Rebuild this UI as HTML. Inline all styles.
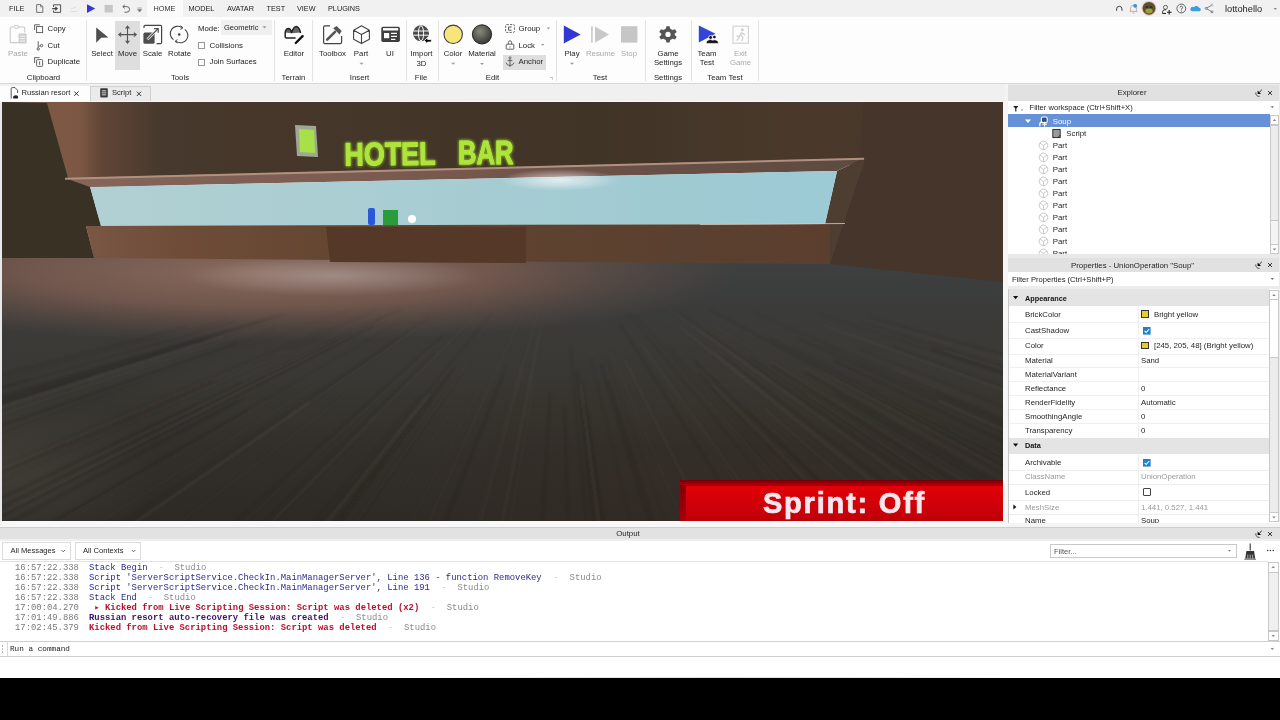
<!DOCTYPE html>
<html><head><meta charset="utf-8"><style>
html,body{margin:0;padding:0}
body{width:1280px;height:720px;overflow:hidden;position:relative;background:#ffffff;font-family:'Liberation Sans', sans-serif}
body div, body svg{position:absolute}

</style></head><body>
<div style="left:0;top:0;width:1280px;height:720px;will-change:transform">
<div style="left:0px;top:0px;width:1280px;height:17px;background:#f1f1f1;"></div><div style="left:147px;top:0px;width:36px;height:17px;background:#fbfbfb;"></div><div style="left:0px;top:17px;width:1280px;height:67px;background:#fdfdfd;"></div><div style="left:0px;top:83px;width:1280px;height:1px;background:#d8d8d8;"></div><div style="left:0px;top:84px;width:1280px;height:441px;background:#f4f4f4;"></div><div style="left:0px;top:84px;width:1005px;height:18px;background:#f0f0f0;"></div><div style="left:0px;top:86px;width:90px;height:16px;background:#fdfdfd;"></div><div style="left:90px;top:86px;width:61px;height:16px;background:#ebebeb;border:1px solid #cfcfcf;border-bottom:none;box-sizing:border-box"></div><div style="left:9px;top:5.36px;font:normal 7.28px/7.28px 'Liberation Sans', sans-serif;color:#1e1e1e;white-space:pre;">FILE</div><div style="left:153.5px;top:5.36px;font:normal 7.28px/7.28px 'Liberation Sans', sans-serif;color:#333;white-space:pre;">HOME</div><div style="left:188.5px;top:5.36px;font:normal 7.28px/7.28px 'Liberation Sans', sans-serif;color:#222;white-space:pre;">MODEL</div><div style="left:227px;top:5.36px;font:normal 7.28px/7.28px 'Liberation Sans', sans-serif;color:#222;white-space:pre;">AVATAR</div><div style="left:266.5px;top:5.36px;font:normal 7.28px/7.28px 'Liberation Sans', sans-serif;color:#222;white-space:pre;">TEST</div><div style="left:297px;top:5.36px;font:normal 7.28px/7.28px 'Liberation Sans', sans-serif;color:#222;white-space:pre;">VIEW</div><div style="left:328px;top:5.36px;font:normal 7.28px/7.28px 'Liberation Sans', sans-serif;color:#222;white-space:pre;">PLUGINS</div><div style="left:1225px;top:5.15px;font:normal 9.3px/9.3px 'Liberation Sans', sans-serif;color:#1e1e1e;white-space:pre;">lottohello</div><div style="left:85.5px;top:20px;width:1px;height:61px;background:#e3e3e3;"></div><div style="left:273.5px;top:20px;width:1px;height:61px;background:#e3e3e3;"></div><div style="left:312px;top:20px;width:1px;height:61px;background:#e3e3e3;"></div><div style="left:405.5px;top:20px;width:1px;height:61px;background:#e3e3e3;"></div><div style="left:437.5px;top:20px;width:1px;height:61px;background:#e3e3e3;"></div><div style="left:555.5px;top:20px;width:1px;height:61px;background:#e3e3e3;"></div><div style="left:644.5px;top:20px;width:1px;height:61px;background:#e3e3e3;"></div><div style="left:690.5px;top:20px;width:1px;height:61px;background:#e3e3e3;"></div><div style="left:758px;top:20px;width:1px;height:61px;background:#e3e3e3;"></div><div style="left:115px;top:21px;width:25px;height:49px;background:#dedede;"></div><div style="left:502.5px;top:54.5px;width:43.5px;height:15.5px;background:#dedede;"></div><div style="left:-256.5px;width:600px;text-align:center;top:74.10px;font:normal 7.8px/7.8px 'Liberation Sans', sans-serif;color:#1e1e1e;white-space:pre;">Clipboard</div><div style="left:-120px;width:600px;text-align:center;top:74.10px;font:normal 7.8px/7.8px 'Liberation Sans', sans-serif;color:#1e1e1e;white-space:pre;">Tools</div><div style="left:-6.5px;width:600px;text-align:center;top:74.10px;font:normal 7.8px/7.8px 'Liberation Sans', sans-serif;color:#1e1e1e;white-space:pre;">Terrain</div><div style="left:59.5px;width:600px;text-align:center;top:74.10px;font:normal 7.8px/7.8px 'Liberation Sans', sans-serif;color:#1e1e1e;white-space:pre;">Insert</div><div style="left:121px;width:600px;text-align:center;top:74.10px;font:normal 7.8px/7.8px 'Liberation Sans', sans-serif;color:#1e1e1e;white-space:pre;">File</div><div style="left:192.5px;width:600px;text-align:center;top:74.10px;font:normal 7.8px/7.8px 'Liberation Sans', sans-serif;color:#1e1e1e;white-space:pre;">Edit</div><div style="left:300px;width:600px;text-align:center;top:74.10px;font:normal 7.8px/7.8px 'Liberation Sans', sans-serif;color:#1e1e1e;white-space:pre;">Test</div><div style="left:368px;width:600px;text-align:center;top:74.10px;font:normal 7.8px/7.8px 'Liberation Sans', sans-serif;color:#1e1e1e;white-space:pre;">Settings</div><div style="left:425px;width:600px;text-align:center;top:74.10px;font:normal 7.8px/7.8px 'Liberation Sans', sans-serif;color:#1e1e1e;white-space:pre;">Team Test</div><div style="left:-282px;width:600px;text-align:center;top:50.10px;font:normal 7.8px/7.8px 'Liberation Sans', sans-serif;color:#a8a8a8;white-space:pre;">Paste</div><div style="left:-198px;width:600px;text-align:center;top:50.10px;font:normal 7.8px/7.8px 'Liberation Sans', sans-serif;color:#1e1e1e;white-space:pre;">Select</div><div style="left:-172.5px;width:600px;text-align:center;top:50.10px;font:normal 7.8px/7.8px 'Liberation Sans', sans-serif;color:#1e1e1e;white-space:pre;">Move</div><div style="left:-147.5px;width:600px;text-align:center;top:50.10px;font:normal 7.8px/7.8px 'Liberation Sans', sans-serif;color:#1e1e1e;white-space:pre;">Scale</div><div style="left:-120.5px;width:600px;text-align:center;top:50.10px;font:normal 7.8px/7.8px 'Liberation Sans', sans-serif;color:#1e1e1e;white-space:pre;">Rotate</div><div style="left:-6px;width:600px;text-align:center;top:50.10px;font:normal 7.8px/7.8px 'Liberation Sans', sans-serif;color:#1e1e1e;white-space:pre;">Editor</div><div style="left:32.5px;width:600px;text-align:center;top:50.10px;font:normal 7.8px/7.8px 'Liberation Sans', sans-serif;color:#1e1e1e;white-space:pre;">Toolbox</div><div style="left:61px;width:600px;text-align:center;top:50.10px;font:normal 7.8px/7.8px 'Liberation Sans', sans-serif;color:#1e1e1e;white-space:pre;">Part</div><div style="left:90px;width:600px;text-align:center;top:50.10px;font:normal 7.8px/7.8px 'Liberation Sans', sans-serif;color:#1e1e1e;white-space:pre;">UI</div><div style="left:121.5px;width:600px;text-align:center;top:50.10px;font:normal 7.8px/7.8px 'Liberation Sans', sans-serif;color:#1e1e1e;white-space:pre;">Import</div><div style="left:121.5px;width:600px;text-align:center;top:59.60px;font:normal 7.8px/7.8px 'Liberation Sans', sans-serif;color:#1e1e1e;white-space:pre;">3D</div><div style="left:153px;width:600px;text-align:center;top:50.10px;font:normal 7.8px/7.8px 'Liberation Sans', sans-serif;color:#1e1e1e;white-space:pre;">Color</div><div style="left:182px;width:600px;text-align:center;top:50.10px;font:normal 7.8px/7.8px 'Liberation Sans', sans-serif;color:#1e1e1e;white-space:pre;">Material</div><div style="left:272px;width:600px;text-align:center;top:50.10px;font:normal 7.8px/7.8px 'Liberation Sans', sans-serif;color:#1e1e1e;white-space:pre;">Play</div><div style="left:300.5px;width:600px;text-align:center;top:50.10px;font:normal 7.8px/7.8px 'Liberation Sans', sans-serif;color:#aaa;white-space:pre;">Resume</div><div style="left:329px;width:600px;text-align:center;top:50.10px;font:normal 7.8px/7.8px 'Liberation Sans', sans-serif;color:#aaa;white-space:pre;">Stop</div><div style="left:368px;width:600px;text-align:center;top:49.60px;font:normal 7.8px/7.8px 'Liberation Sans', sans-serif;color:#1e1e1e;white-space:pre;">Game</div><div style="left:368px;width:600px;text-align:center;top:59.10px;font:normal 7.8px/7.8px 'Liberation Sans', sans-serif;color:#1e1e1e;white-space:pre;">Settings</div><div style="left:407px;width:600px;text-align:center;top:49.60px;font:normal 7.8px/7.8px 'Liberation Sans', sans-serif;color:#1e1e1e;white-space:pre;">Team</div><div style="left:407px;width:600px;text-align:center;top:59.10px;font:normal 7.8px/7.8px 'Liberation Sans', sans-serif;color:#1e1e1e;white-space:pre;">Test</div><div style="left:440.5px;width:600px;text-align:center;top:49.60px;font:normal 7.8px/7.8px 'Liberation Sans', sans-serif;color:#aaa;white-space:pre;">Exit</div><div style="left:440.5px;width:600px;text-align:center;top:59.10px;font:normal 7.8px/7.8px 'Liberation Sans', sans-serif;color:#aaa;white-space:pre;">Game</div><div style="left:47.5px;top:25.10px;font:normal 7.8px/7.8px 'Liberation Sans', sans-serif;color:#1e1e1e;white-space:pre;">Copy</div><div style="left:47.5px;top:41.60px;font:normal 7.8px/7.8px 'Liberation Sans', sans-serif;color:#1e1e1e;white-space:pre;">Cut</div><div style="left:47.5px;top:58.10px;font:normal 7.8px/7.8px 'Liberation Sans', sans-serif;color:#1e1e1e;white-space:pre;">Duplicate</div><div style="left:198px;top:24.60px;font:normal 7.8px/7.8px 'Liberation Sans', sans-serif;color:#1e1e1e;white-space:pre;">Mode:</div><div style="left:221px;top:20px;width:51px;height:14.5px;background:#f0f0f0;"></div><div style="left:224px;top:23.75px;font:normal 7.49px/7.49px 'Liberation Sans', sans-serif;color:#1e1e1e;white-space:pre;">Geometric</div><div style="left:198px;top:41.60px;font:normal 7.8px/7.8px 'Liberation Sans', sans-serif;color:#222;white-space:pre;"></div><div style="left:198px;top:42px;width:7px;height:7px;background:#fff;border:1px solid #999;box-sizing:border-box"></div><div style="left:209.5px;top:41.60px;font:normal 7.8px/7.8px 'Liberation Sans', sans-serif;color:#1e1e1e;white-space:pre;">Collisions</div><div style="left:198px;top:59px;width:7px;height:7px;background:#fff;border:1px solid #999;box-sizing:border-box"></div><div style="left:209.5px;top:58.10px;font:normal 7.8px/7.8px 'Liberation Sans', sans-serif;color:#1e1e1e;white-space:pre;">Join Surfaces</div><div style="left:518.5px;top:25.10px;font:normal 7.8px/7.8px 'Liberation Sans', sans-serif;color:#1e1e1e;white-space:pre;">Group</div><div style="left:518.5px;top:41.60px;font:normal 7.8px/7.8px 'Liberation Sans', sans-serif;color:#1e1e1e;white-space:pre;">Lock</div><div style="left:518.5px;top:58.10px;font:normal 7.8px/7.8px 'Liberation Sans', sans-serif;color:#1e1e1e;white-space:pre;">Anchor</div><div style="left:21.5px;top:89.00px;font:normal 7.59px/7.59px 'Liberation Sans', sans-serif;color:#1e1e1e;white-space:pre;">Russian resort</div><svg style="left:70px;top:88px;overflow:visible" width="12" height="12" viewBox="70 88 12 12"><path d="M74.2,91.4 L78.6,95.8 M78.6,91.4 L74.2,95.8" stroke="#222" stroke-width="0.9"/></svg><div style="left:112px;top:89.41px;font:normal 7.59px/7.59px 'Liberation Sans', sans-serif;color:#1e1e1e;white-space:pre;">Script</div><svg style="left:133px;top:88px;overflow:visible" width="12" height="12" viewBox="133 88 12 12"><path d="M136.8,91.6 L141.2,96 M141.2,91.6 L136.8,96" stroke="#222" stroke-width="0.9"/></svg><svg style="left:30px;top:0px;overflow:visible" width="120" height="17" viewBox="30 0 120 17">
<path d="M36.6,4.6 H40.8 L42.8,6.6 V12.4 H36.6 Z" fill="none" stroke="#666" stroke-width="0.9"/>
<path d="M40.6,4.6 V6.8 H42.8" fill="none" stroke="#666" stroke-width="0.8"/>
<path d="M53.5,7 V4.8 H60.6 V12.4 H53.5 V10.5" fill="none" stroke="#555" stroke-width="1"/>
<path d="M52.2,8.6 H56.8 M55.2,6.8 L57.2,8.6 L55.2,10.4" fill="none" stroke="#444" stroke-width="1.1"/>
<path d="M70.5,11.5 H77 M71,9 L76,7" fill="none" stroke="#ddd" stroke-width="1"/>
<path d="M87,4.2 L95.2,8.6 L87,13 Z" fill="#3538d6"/>
<rect x="104.6" y="4.9" width="8.2" height="7.6" fill="#c6c6c6"/>
<path d="M123.2,6.6 H126.8 A2.8,2.8 0 0 1 126.8,12.2 H124.5 M124.8,4.8 L122.8,6.6 L124.8,8.4" fill="none" stroke="#555" stroke-width="0.9"/>
<path d="M137.4,8 H141.8 M137.6,9.6 L141.6,9.6 L139.6,12 Z" fill="#777" stroke="#777" stroke-width="0.6"/>
</svg><svg style="left:1110px;top:0px;overflow:visible" width="170" height="17" viewBox="1110 0 170 17">
<path d="M1116.6,10.8 V9 A2.7,2.7 0 0 1 1122,9 V10.8" fill="none" stroke="#444" stroke-width="1"/>
<path d="M1129.6,11.4 H1137.4 M1130.6,11.4 V8 A2.9,2.9 0 0 1 1136.4,8 V11.4 M1132.4,12.6 A1.2,1.2 0 0 0 1134.6,12.6" fill="none" stroke="#c0a8a8" stroke-width="0.9"/>
<circle cx="1135.2" cy="5.8" r="1.9" fill="#3a8fc8"/>
<circle cx="1149" cy="8.3" r="7.4" fill="#e8c0c0"/>
<circle cx="1149" cy="8.3" r="6.4" fill="#5a5030"/>
<ellipse cx="1149" cy="11" rx="3.6" ry="2.4" fill="#9aa040"/>
<ellipse cx="1147" cy="7" rx="1.5" ry="1" fill="#3a2a20"/><ellipse cx="1151" cy="7" rx="1.5" ry="1" fill="#3a2a20"/>
<circle cx="1165.5" cy="7.3" r="2" fill="none" stroke="#555" stroke-width="0.9"/>
<path d="M1162.6,13.5 V11.8 A2.2,2.2 0 0 1 1164.8,9.8 H1166" fill="none" stroke="#333" stroke-width="1"/>
<path d="M1162.6,13.5 H1166" stroke="#222" stroke-width="1"/>
<path d="M1169.2,10 V14.4 M1167,12.2 H1171.6" stroke="#222" stroke-width="1.1"/>
<circle cx="1181.3" cy="8.5" r="4.4" fill="none" stroke="#555" stroke-width="0.9"/>
<path d="M1180,7.4 A1.3,1.3 0 1 1 1181.4,8.8 V9.6" fill="none" stroke="#444" stroke-width="0.8"/><circle cx="1181.4" cy="10.9" r="0.5" fill="#444"/>
<path d="M1191.5,11.3 H1199.6 A1.8,1.8 0 0 0 1199,7.8 A2.8,2.8 0 0 0 1194,7.2 A2.1,2.1 0 0 0 1191.5,11.3 Z" fill="#3aa0dc"/>
<circle cx="1206.2" cy="8.4" r="1" fill="none" stroke="#666" stroke-width="0.8"/>
<circle cx="1212" cy="5" r="1" fill="none" stroke="#aaa" stroke-width="0.8"/>
<circle cx="1212" cy="11.9" r="1" fill="none" stroke="#666" stroke-width="0.8"/>
<path d="M1207,7.9 L1211.2,5.5 M1207,8.9 L1211.2,11.4" stroke="#666" stroke-width="0.8"/>
<path d="M1273.5,8 L1277,8 L1275.25,10 Z" fill="#888"/>
</svg><svg style="left:0px;top:17px;overflow:visible" width="90" height="67" viewBox="0 17 90 67">
<path d="M17.8,27 H23.6 A1.2,1.2 0 0 1 24.8,28.2 V32.5 M18.8,42.6 H11.4 A1.2,1.2 0 0 1 10.2,41.4 V28.2 A1.2,1.2 0 0 1 11.4,27 H13.4" fill="none" stroke="#cacaca" stroke-width="1.1"/>
<rect x="14.2" y="25.6" width="4.4" height="2.6" rx="0.8" fill="none" stroke="#cacaca" stroke-width="1"/>
<rect x="18.6" y="33.4" width="8" height="10" rx="0.6" fill="#cdcdcd"/>
<path d="M20.2,36.2 H25 M20.2,38.6 H25 M20.2,41 H25" stroke="#fff" stroke-width="0.8"/>
<path d="M34.6,30 V24.8 H39.8" fill="none" stroke="#555" stroke-width="0.9"/>
<rect x="36.6" y="26.6" width="6" height="6" fill="none" stroke="#555" stroke-width="0.9"/>
<circle cx="38.2" cy="49" r="1.2" fill="none" stroke="#444" stroke-width="0.8"/>
<circle cx="41.6" cy="45.6" r="1.2" fill="none" stroke="#444" stroke-width="0.8"/>
<path d="M38.2,41.2 V47.8 M38.8,46.2 L40.6,45.8" stroke="#444" stroke-width="0.8" fill="none"/>
<path d="M34.6,63 V57.6 H39.6" fill="none" stroke="#555" stroke-width="0.9"/>
<rect x="36.6" y="59.6" width="6" height="6.8" rx="0.8" fill="none" stroke="#555" stroke-width="0.9"/>
<path d="M39.6,61.4 V64.8" stroke="#555" stroke-width="0.9"/>
</svg><svg style="left:90px;top:17px;overflow:visible" width="185" height="67" viewBox="90 17 185 67">
<path d="M96.2,27.4 L108.4,37.4 L101.2,37.8 L96.2,42.8 Z" fill="#4e4e4e"/>
<path d="M127.5,26.6 V42.6 M119.2,34.6 H135.8" stroke="#555" stroke-width="1.1"/>
<path d="M125.6,28.6 L127.5,26.2 L129.4,28.6 M125.6,40.6 L127.5,43 L129.4,40.6 M121.2,32.7 L118.8,34.6 L121.2,36.5 M133.8,32.7 L136.2,34.6 L133.8,36.5" fill="none" stroke="#555" stroke-width="1.1"/>
<path d="M144,28 V26.6 A1.2,1.2 0 0 1 145.2,25.4 H160.4 A1.2,1.2 0 0 1 161.6,26.6 V42.4 A1.2,1.2 0 0 1 160.4,43.6 H156.6" fill="none" stroke="#444" stroke-width="1.2"/>
<rect x="143.4" y="32.6" width="11.2" height="11.2" rx="1.6" fill="#4e4e4e"/>
<path d="M147.4,39.4 L157.8,29" stroke="#fff" stroke-width="2.6"/>
<path d="M147.4,39.4 L157.8,29" stroke="#4e4e4e" stroke-width="1.1"/>
<path d="M154,28.6 H158.2 V32.8" fill="none" stroke="#4e4e4e" stroke-width="1.2"/>
<path d="M173.4,39.6 A7.2,7.2 0 0 1 181.8,27.6" fill="none" stroke="#444" stroke-width="1.1"/>
<path d="M184.8,29.4 A7.2,7.2 0 0 1 176.2,41.4" fill="none" stroke="#444" stroke-width="1.1"/>
<path d="M180.6,25.8 L183,27.8 L180.4,29.4 M177.4,39.6 L175,41.4 L177.6,43" fill="none" stroke="#444" stroke-width="1"/>
<circle cx="179.2" cy="34.5" r="1.3" fill="#444"/>
<path d="M262.5,26.2 L266.5,26.2 L264.5,28.6 Z" fill="#999"/>
</svg><svg style="left:275px;top:17px;overflow:visible" width="165" height="67" viewBox="275 17 165 67">
<path d="M285.2,32.4 Q285.6,28.4 288.8,28.4 Q290.6,28.6 291.6,32 Q293.6,26.2 296.4,26.4 Q299.4,27 300.6,32.6 L291.4,33.2 Z" fill="#666"/>
<path d="M295.6,37.9 H286.6 Q285.2,37.9 285.2,36.4 V32.4 Q285.6,28.4 288.8,28.4 Q290.6,28.6 291.6,32.4 Q293.6,26.2 296.4,26.4 Q299.4,27 300.6,33" fill="none" stroke="#222" stroke-width="1.5" stroke-linejoin="round"/>
<path d="M295.8,43 L300.6,38.2" stroke="#111" stroke-width="2.4" stroke-linecap="round"/>
<path d="M301.6,37.2 L302.6,36.2" stroke="#111" stroke-width="2.4" stroke-linecap="round"/>
<path d="M330,25.8 H325 A1.4,1.4 0 0 0 323.6,27.2 V42.2 A1.4,1.4 0 0 0 325,43.6 H340.2 A1.4,1.4 0 0 0 341.6,42.2 V36" fill="none" stroke="#444" stroke-width="1.2"/>
<path d="M327.2,39.6 L335,31.8" stroke="#555" stroke-width="2.6" stroke-linecap="round"/>
<path d="M333.2,28.2 L336.6,26 L341.6,31 L339.6,34.4 Z" fill="#555"/>
<path d="M361.5,25.8 L369.4,30.2 V39.2 L361.5,43.6 L353.6,39.2 V30.2 Z M353.6,30.2 L361.5,34.6 L369.4,30.2 M361.5,34.6 V43.6" fill="none" stroke="#444" stroke-width="1.1" stroke-linejoin="round"/>
<rect x="381.3" y="26.8" width="18.6" height="15.3" rx="1.8" fill="#3e3e3e"/>
<rect x="383" y="28.1" width="15.2" height="2.4" fill="#fff"/>
<rect x="384" y="33" width="5.2" height="5.2" fill="#fff"/>
<path d="M391,33.4 H397 M391,36.4 H397 M391,39.4 H395.4" stroke="#fff" stroke-width="1.1"/>
<circle cx="421" cy="33.3" r="8" fill="#4a4a4a"/>
<path d="M413.4,31 H428.6 M413.4,35.2 H428.6" stroke="#fff" stroke-width="1"/>
<ellipse cx="421" cy="33.3" rx="2.6" ry="7.6" fill="none" stroke="#fff" stroke-width="1"/>
<path d="M424.4,40.6 L427.6,37.4 L427.6,39.4 H431.4 V42 H427.6 V44 Z" fill="#000" stroke="#fff" stroke-width="0.8" stroke-linejoin="round"/>
<path d="M359.5,62.8 H363.5 L361.5,64.8 Z" fill="#999"/>
</svg><svg style="left:440px;top:17px;overflow:visible" width="120" height="67" viewBox="440 17 120 67">
<circle cx="453.2" cy="34.3" r="9.2" fill="#f6e47c" stroke="#3c3c3c" stroke-width="1.1"/>
<defs><radialGradient id="mat" cx="0.4" cy="0.35" r="0.7"><stop offset="0" stop-color="#8a8a7a"/><stop offset="1" stop-color="#333"/></radialGradient></defs>
<circle cx="482" cy="34.4" r="9.6" fill="url(#mat)" stroke="#222" stroke-width="1"/>
<path d="M451.2,62.8 H455.2 L453.2,64.8 Z" fill="#999"/>
<path d="M480,63 H484 L482,65 Z" fill="#999"/>
<rect x="505.6" y="24.6" width="8.8" height="7.8" rx="1" fill="none" stroke="#555" stroke-width="0.9" stroke-dasharray="2.2 1.2"/>
<path d="M511.6,27 H508.6 V30.2 H511.6" fill="none" stroke="#444" stroke-width="0.9"/>
<path d="M546.6,27.6 H550 L548.3,29.4 Z" fill="#999"/>
<path d="M508.4,44.2 V42.4 A1.6,1.6 0 0 1 511.6,42.4 V44.2" fill="none" stroke="#555" stroke-width="0.9"/>
<rect x="506.2" y="44.2" width="7.6" height="5" rx="0.6" fill="none" stroke="#555" stroke-width="0.9"/>
<path d="M509.4,47 H510.6" stroke="#555" stroke-width="0.9"/>
<path d="M541,44 H544.4 L542.7,45.8 Z" fill="#999"/>
<circle cx="510" cy="57.8" r="1" fill="none" stroke="#555" stroke-width="0.8"/>
<path d="M510,58.8 V66.8 M507.6,60.6 H512.4 M506,62.6 A4.2,4.2 0 0 0 514,62.6" fill="none" stroke="#555" stroke-width="0.9"/>
<path d="M550,77.4 H552.4 V79.8" fill="none" stroke="#aaa" stroke-width="0.7"/>
</svg><svg style="left:560px;top:17px;overflow:visible" width="200" height="67" viewBox="560 17 200 67">
<path d="M563.8,25.6 L580.6,34.6 L563.8,43.6 Z" fill="#3338d4"/>
<rect x="591" y="26.4" width="1.8" height="16.4" fill="#cfcfcf"/>
<path d="M595,26.4 L609,34.6 L595,42.8 Z" fill="#c9c9c9"/>
<rect x="621" y="26.2" width="16.4" height="16.4" fill="#c6c6c6"/>
<path d="M570,62.8 H574 L572,64.8 Z" fill="#999"/>
<g transform="translate(668,34.4)"><path d="M-1.6,-8.2 H1.6 L2.2,-5.6 L4.6,-4.3 L7.1,-5.2 L8.7,-2.4 L6.7,-0.6 V0.6 L8.7,2.4 L7.1,5.2 L4.6,4.3 L2.2,5.6 L1.6,8.2 H-1.6 L-2.2,5.6 L-4.6,4.3 L-7.1,5.2 L-8.7,2.4 L-6.7,0.6 V-0.6 L-8.7,-2.4 L-7.1,-5.2 L-4.6,-4.3 L-2.2,-5.6 Z" fill="#555"/><circle r="2.6" fill="#fff"/></g>
<path d="M698.8,25.6 L715.6,33.8 L698.8,42.6 Z" fill="#3344d8"/>
<circle cx="710.6" cy="37.4" r="1.9" fill="#111" stroke="#fff" stroke-width="0.8"/>
<circle cx="714.4" cy="37" r="1.8" fill="#111" stroke="#fff" stroke-width="0.8"/>
<path d="M706.4,43.4 A4,3 0 0 1 712.6,40.2 A4,3 0 0 1 718.4,43.4 Z" fill="#111" stroke="#fff" stroke-width="0.6"/>
<rect x="733" y="26.2" width="15.4" height="17" fill="none" stroke="#d4d4d4" stroke-width="1.2"/>
<circle cx="742.4" cy="29.8" r="1.5" fill="#d0d0d0"/>
<path d="M741.6,32.2 L739.4,36.4 L736.4,36 M740.8,34.6 L743,38 L741.6,41 M739.6,36.8 L736.8,40.6 M742,33 L745,35" fill="none" stroke="#d0d0d0" stroke-width="1.3"/>
</svg><svg style="left:0px;top:84px;overflow:visible" width="160" height="18" viewBox="0 84 160 18">
<path d="M11.2,98.6 V88.6 A1,1 0 0 1 12.2,87.6 H15 L17.6,90.2 V93" fill="none" stroke="#444" stroke-width="0.9"/>
<path d="M13.4,98.6 A2.4,2.2 0 0 1 18,96.6 A1.6,1.6 0 0 1 17.6,98.6 Z" fill="#222"/>
<rect x="100.2" y="88.2" width="7.6" height="9.2" rx="0.8" fill="#3a3a3a"/>
<path d="M101.8,90.8 H106.2 M101.8,92.8 H106.2 M101.8,94.8 H106.2" stroke="#fff" stroke-width="0.8"/>
</svg><svg style="left:0px;top:0px;left:0;top:0" width="1280" height="720" viewBox="0 0 1280 720">
<defs>
 <linearGradient id="gUp" gradientUnits="userSpaceOnUse" x1="40" y1="0" x2="1003" y2="0">
  <stop offset="0" stop-color="#7e5a46"/><stop offset="0.04" stop-color="#7c5844"/><stop offset="0.065" stop-color="#604536"/><stop offset="0.125" stop-color="#47392d"/><stop offset="0.22" stop-color="#46372a"/><stop offset="0.58" stop-color="#403427"/><stop offset="0.79" stop-color="#4a392b"/><stop offset="1" stop-color="#45352a"/>
 </linearGradient>
 <linearGradient id="gUpV" x1="0" y1="0" x2="0" y2="1">
  <stop offset="0" stop-color="#2a1a10" stop-opacity="0.35"/><stop offset="0.5" stop-color="#2a1a10" stop-opacity="0"/><stop offset="1" stop-color="#2a1a10" stop-opacity="0"/>
 </linearGradient>
 <linearGradient id="gSky" gradientUnits="userSpaceOnUse" x1="90" y1="0" x2="840" y2="0">
  <stop offset="0" stop-color="#b0d0d4"/><stop offset="0.18" stop-color="#aecfd2"/><stop offset="0.76" stop-color="#a0cad2"/><stop offset="1" stop-color="#9ccad6"/>
 </linearGradient>
 <linearGradient id="gBeam" gradientUnits="userSpaceOnUse" x1="65" y1="0" x2="864" y2="0">
  <stop offset="0" stop-color="#86665a"/><stop offset="0.42" stop-color="#7a5a4e"/><stop offset="0.7" stop-color="#6a5046"/><stop offset="1" stop-color="#5e4a40"/>
 </linearGradient>
 <linearGradient id="gSkyV" x1="0" y1="0" x2="0" y2="1">
  <stop offset="0" stop-color="#ffffff" stop-opacity="0.0"/><stop offset="1" stop-color="#ffffff" stop-opacity="0.12"/>
 </linearGradient>
 <linearGradient id="gFloor" gradientUnits="userSpaceOnUse" x1="0" y1="256" x2="0" y2="522">
  <stop offset="0" stop-color="#3e4142"/><stop offset="0.17" stop-color="#3b3c3b"/><stop offset="0.3" stop-color="#3b3a37"/><stop offset="0.45" stop-color="#393834"/><stop offset="0.54" stop-color="#373530"/><stop offset="0.73" stop-color="#322f2b"/><stop offset="1" stop-color="#2d2a26"/>
 </linearGradient>
 <radialGradient id="gBand" cx="0.5" cy="0.5" r="0.5">
  <stop offset="0" stop-color="#8a6a5e" stop-opacity="1"/><stop offset="0.5" stop-color="#7c5c50" stop-opacity="0.8"/><stop offset="1" stop-color="#6a5048" stop-opacity="0"/>
 </radialGradient>
 <linearGradient id="gFloorH" gradientUnits="userSpaceOnUse" x1="0" y1="0" x2="1003" y2="0">
  <stop offset="0" stop-color="#3a3430" stop-opacity="0.0"/><stop offset="0.5" stop-color="#3a3430" stop-opacity="0"/><stop offset="1" stop-color="#3c4448" stop-opacity="0.35"/>
 </linearGradient>
 <linearGradient id="gFloorBR" gradientUnits="userSpaceOnUse" x1="300" y1="330" x2="700" y2="522">
  <stop offset="0" stop-color="#4a3a2c" stop-opacity="0"/><stop offset="1" stop-color="#4a3a2c" stop-opacity="0.6"/>
 </linearGradient>
 <linearGradient id="gLow" gradientUnits="userSpaceOnUse" x1="86" y1="0" x2="830" y2="0">
  <stop offset="0" stop-color="#7a5644"/><stop offset="0.126" stop-color="#6e4c38"/><stop offset="0.4" stop-color="#62442f"/><stop offset="0.825" stop-color="#5a4030"/><stop offset="1" stop-color="#5c3e2e"/>
 </linearGradient>
 <radialGradient id="gBR" cx="0.5" cy="0.5" r="0.5">
  <stop offset="0" stop-color="#3a2c22" stop-opacity="0.5"/><stop offset="1" stop-color="#3a2c22" stop-opacity="0"/>
 </radialGradient>
 <radialGradient id="gBL" cx="0.5" cy="0.5" r="0.5">
  <stop offset="0" stop-color="#46443c" stop-opacity="0.7"/><stop offset="1" stop-color="#46443c" stop-opacity="0"/>
 </radialGradient>
 <radialGradient id="gHaze" cx="0.5" cy="0.5" r="0.5">
  <stop offset="0" stop-color="#b8aca8" stop-opacity="0.55"/><stop offset="1" stop-color="#b8aca8" stop-opacity="0"/>
 </radialGradient>
 <radialGradient id="gSun" cx="0.5" cy="0.5" r="0.5">
  <stop offset="0" stop-color="#ffffff" stop-opacity="0.85"/><stop offset="1" stop-color="#ffffff" stop-opacity="0"/>
 </radialGradient>
 <radialGradient id="gWallHi" cx="0.5" cy="0.5" r="0.5">
  <stop offset="0" stop-color="#9a6a50" stop-opacity="0.5"/><stop offset="1" stop-color="#9a6a50" stop-opacity="0"/>
 </radialGradient>
 <filter id="glow" x="-20%" y="-40%" width="140%" height="180%"><feGaussianBlur stdDeviation="1.5" result="b"/><feMerge><feMergeNode in="b"/><feMergeNode in="SourceGraphic"/></feMerge></filter>
 <linearGradient id="gFade" gradientUnits="userSpaceOnUse" x1="0" y1="275" x2="0" y2="345"><stop offset="0" stop-color="#fff" stop-opacity="0"/><stop offset="1" stop-color="#fff" stop-opacity="1"/></linearGradient><mask id="floorMask" maskUnits="userSpaceOnUse" x="2" y="250" width="1001" height="272"><rect x="2" y="250" width="1001" height="272" fill="url(#gFade)"/></mask>
 <filter id="soft2" x="-5%" y="-5%" width="110%" height="110%"><feGaussianBlur stdDeviation="1.1"/></filter>
 <filter id="soft"><feGaussianBlur stdDeviation="0.6"/></filter>
</defs>
<!-- floor -->
<rect x="2" y="250" width="1001" height="272" fill="url(#gFloor)"/>
<ellipse cx="260" cy="272" rx="480" ry="70" fill="url(#gBand)"/>
<ellipse cx="720" cy="540" rx="420" ry="200" fill="url(#gBR)"/>
<ellipse cx="0" cy="470" rx="160" ry="90" fill="url(#gBL)"/>
<ellipse cx="335" cy="276" rx="150" ry="20" fill="url(#gHaze)"/>
<g mask="url(#floorMask)"><g filter="url(#soft2)"><line x1="506.7" y1="363.8" x2="440.5" y2="530" stroke="#201c18" stroke-opacity="0.07" stroke-width="2.0"/><line x1="620.1" y1="324.4" x2="751.0" y2="530" stroke="#201c18" stroke-opacity="0.08" stroke-width="2.6"/><line x1="223.9" y1="336.9" x2="-383.5" y2="530" stroke="#7a7068" stroke-opacity="0.10" stroke-width="2.4"/><line x1="-71.6" y1="408.1" x2="-503.7" y2="530" stroke="#201c18" stroke-opacity="0.09" stroke-width="2.2"/><line x1="356.4" y1="306.6" x2="-237.8" y2="530" stroke="#201c18" stroke-opacity="0.04" stroke-width="1.4"/><line x1="402.8" y1="308.2" x2="-43.5" y2="530" stroke="#201c18" stroke-opacity="0.07" stroke-width="2.7"/><line x1="576.1" y1="372.2" x2="594.0" y2="530" stroke="#201c18" stroke-opacity="0.09" stroke-width="1.9"/><line x1="248.3" y1="409.8" x2="39.8" y2="530" stroke="#201c18" stroke-opacity="0.10" stroke-width="2.4"/><line x1="416.3" y1="329.1" x2="125.1" y2="530" stroke="#7a7068" stroke-opacity="0.04" stroke-width="2.5"/><line x1="429.4" y1="393.9" x2="320.9" y2="530" stroke="#7a7068" stroke-opacity="0.11" stroke-width="2.7"/><line x1="185.3" y1="327.0" x2="-598.7" y2="530" stroke="#201c18" stroke-opacity="0.07" stroke-width="3.0"/><line x1="492.2" y1="312.7" x2="314.1" y2="530" stroke="#201c18" stroke-opacity="0.09" stroke-width="1.5"/><line x1="208.4" y1="339.9" x2="-399.6" y2="530" stroke="#201c18" stroke-opacity="0.09" stroke-width="1.2"/><line x1="390.7" y1="315.6" x2="-33.3" y2="530" stroke="#7a7068" stroke-opacity="0.10" stroke-width="1.4"/><line x1="611.4" y1="352.0" x2="686.4" y2="530" stroke="#7a7068" stroke-opacity="0.09" stroke-width="1.3"/><line x1="653.2" y1="317.2" x2="880.5" y2="530" stroke="#7a7068" stroke-opacity="0.05" stroke-width="1.5"/><line x1="1130.0" y1="389.4" x2="1633.1" y2="530" stroke="#7a7068" stroke-opacity="0.10" stroke-width="1.4"/><line x1="421.0" y1="394.7" x2="306.8" y2="530" stroke="#201c18" stroke-opacity="0.05" stroke-width="3.0"/><line x1="332.1" y1="332.1" x2="-109.5" y2="530" stroke="#201c18" stroke-opacity="0.06" stroke-width="1.6"/><line x1="280.9" y1="314.5" x2="-431.2" y2="530" stroke="#201c18" stroke-opacity="0.06" stroke-width="2.2"/><line x1="435.3" y1="352.6" x2="254.9" y2="530" stroke="#201c18" stroke-opacity="0.07" stroke-width="2.1"/><line x1="821.6" y1="324.2" x2="1393.0" y2="530" stroke="#7a7068" stroke-opacity="0.10" stroke-width="2.6"/><line x1="374.5" y1="324.9" x2="-26.2" y2="530" stroke="#201c18" stroke-opacity="0.11" stroke-width="1.4"/><line x1="1132.9" y1="397.6" x2="1585.3" y2="530" stroke="#201c18" stroke-opacity="0.07" stroke-width="1.2"/><line x1="-68.6" y1="406.1" x2="-511.0" y2="530" stroke="#7a7068" stroke-opacity="0.09" stroke-width="1.5"/><line x1="897.0" y1="367.6" x2="1294.6" y2="530" stroke="#7a7068" stroke-opacity="0.05" stroke-width="2.4"/><line x1="229.5" y1="329.0" x2="-441.8" y2="530" stroke="#201c18" stroke-opacity="0.10" stroke-width="2.2"/><line x1="265.6" y1="401.3" x2="44.5" y2="530" stroke="#7a7068" stroke-opacity="0.04" stroke-width="1.5"/><line x1="523.4" y1="311.3" x2="425.1" y2="530" stroke="#7a7068" stroke-opacity="0.07" stroke-width="2.1"/><line x1="237.0" y1="343.0" x2="-297.4" y2="530" stroke="#201c18" stroke-opacity="0.11" stroke-width="2.3"/><line x1="755.4" y1="366.4" x2="989.8" y2="530" stroke="#7a7068" stroke-opacity="0.04" stroke-width="1.0"/><line x1="1022.4" y1="378.6" x2="1493.5" y2="530" stroke="#201c18" stroke-opacity="0.04" stroke-width="2.3"/><line x1="534.3" y1="381.7" x2="509.1" y2="530" stroke="#7a7068" stroke-opacity="0.11" stroke-width="1.2"/><line x1="608.8" y1="382.4" x2="656.0" y2="530" stroke="#201c18" stroke-opacity="0.09" stroke-width="2.4"/><line x1="938.9" y1="401.1" x2="1224.5" y2="530" stroke="#7a7068" stroke-opacity="0.09" stroke-width="2.8"/><line x1="894.0" y1="348.8" x2="1403.5" y2="530" stroke="#201c18" stroke-opacity="0.10" stroke-width="2.1"/><line x1="666.5" y1="345.1" x2="837.4" y2="530" stroke="#201c18" stroke-opacity="0.08" stroke-width="1.2"/><line x1="745.7" y1="409.3" x2="870.6" y2="530" stroke="#201c18" stroke-opacity="0.09" stroke-width="1.8"/><line x1="800.5" y1="366.0" x2="1090.6" y2="530" stroke="#7a7068" stroke-opacity="0.10" stroke-width="1.2"/><line x1="707.3" y1="308.1" x2="1125.5" y2="530" stroke="#201c18" stroke-opacity="0.07" stroke-width="1.5"/><line x1="749.2" y1="357.2" x2="1006.2" y2="530" stroke="#201c18" stroke-opacity="0.10" stroke-width="1.5"/><line x1="157.0" y1="336.6" x2="-574.0" y2="530" stroke="#201c18" stroke-opacity="0.05" stroke-width="1.3"/><line x1="1004.0" y1="374.3" x2="1483.2" y2="530" stroke="#7a7068" stroke-opacity="0.10" stroke-width="1.7"/><line x1="678.7" y1="325.8" x2="931.6" y2="530" stroke="#7a7068" stroke-opacity="0.10" stroke-width="2.8"/><line x1="892.5" y1="345.4" x2="1424.6" y2="530" stroke="#201c18" stroke-opacity="0.06" stroke-width="1.3"/><line x1="550.2" y1="392.9" x2="541.9" y2="530" stroke="#201c18" stroke-opacity="0.09" stroke-width="2.9"/><line x1="398.2" y1="322.8" x2="36.6" y2="530" stroke="#201c18" stroke-opacity="0.06" stroke-width="1.4"/><line x1="462.5" y1="370.7" x2="352.2" y2="530" stroke="#201c18" stroke-opacity="0.06" stroke-width="2.7"/><line x1="1008.7" y1="352.5" x2="1658.7" y2="530" stroke="#7a7068" stroke-opacity="0.04" stroke-width="2.7"/><line x1="29.8" y1="379.4" x2="-504.6" y2="530" stroke="#201c18" stroke-opacity="0.06" stroke-width="2.6"/><line x1="227.9" y1="319.3" x2="-556.0" y2="530" stroke="#201c18" stroke-opacity="0.04" stroke-width="2.7"/><line x1="376.2" y1="319.8" x2="-54.0" y2="530" stroke="#7a7068" stroke-opacity="0.08" stroke-width="1.9"/><line x1="698.5" y1="373.8" x2="848.9" y2="530" stroke="#201c18" stroke-opacity="0.11" stroke-width="2.4"/><line x1="268.0" y1="354.9" x2="-141.5" y2="530" stroke="#7a7068" stroke-opacity="0.04" stroke-width="1.9"/><line x1="710.9" y1="323.8" x2="1042.6" y2="530" stroke="#7a7068" stroke-opacity="0.06" stroke-width="2.4"/><line x1="577.2" y1="369.5" x2="597.0" y2="530" stroke="#201c18" stroke-opacity="0.07" stroke-width="2.6"/><line x1="819.3" y1="314.2" x2="1484.3" y2="530" stroke="#201c18" stroke-opacity="0.09" stroke-width="1.3"/><line x1="505.2" y1="370.7" x2="443.1" y2="530" stroke="#201c18" stroke-opacity="0.07" stroke-width="2.1"/><line x1="1016.1" y1="388.7" x2="1422.4" y2="530" stroke="#201c18" stroke-opacity="0.07" stroke-width="2.3"/><line x1="213.8" y1="380.8" x2="-128.7" y2="530" stroke="#201c18" stroke-opacity="0.08" stroke-width="2.4"/><line x1="181.8" y1="399.5" x2="-109.4" y2="530" stroke="#201c18" stroke-opacity="0.11" stroke-width="2.1"/><line x1="798.6" y1="338.6" x2="1218.8" y2="530" stroke="#201c18" stroke-opacity="0.10" stroke-width="1.7"/><line x1="168.0" y1="351.3" x2="-409.6" y2="530" stroke="#201c18" stroke-opacity="0.09" stroke-width="2.0"/><line x1="-23.7" y1="390.0" x2="-534.7" y2="530" stroke="#7a7068" stroke-opacity="0.10" stroke-width="1.3"/><line x1="355.2" y1="387.7" x2="170.5" y2="530" stroke="#7a7068" stroke-opacity="0.05" stroke-width="2.0"/><line x1="834.3" y1="393.2" x2="1064.2" y2="530" stroke="#201c18" stroke-opacity="0.11" stroke-width="2.0"/><line x1="846.6" y1="314.0" x2="1583.1" y2="530" stroke="#7a7068" stroke-opacity="0.08" stroke-width="1.6"/><line x1="804.5" y1="372.1" x2="1076.3" y2="530" stroke="#201c18" stroke-opacity="0.10" stroke-width="2.1"/><line x1="390.1" y1="345.0" x2="116.9" y2="530" stroke="#201c18" stroke-opacity="0.10" stroke-width="1.4"/><line x1="1029.3" y1="406.7" x2="1356.8" y2="530" stroke="#201c18" stroke-opacity="0.08" stroke-width="1.4"/><line x1="590.9" y1="357.8" x2="632.6" y2="530" stroke="#201c18" stroke-opacity="0.04" stroke-width="2.9"/><line x1="570.5" y1="347.1" x2="586.8" y2="530" stroke="#201c18" stroke-opacity="0.08" stroke-width="2.0"/><line x1="677.2" y1="311.9" x2="989.3" y2="530" stroke="#201c18" stroke-opacity="0.07" stroke-width="2.9"/><line x1="891.8" y1="333.3" x2="1523.9" y2="530" stroke="#201c18" stroke-opacity="0.05" stroke-width="1.9"/><line x1="964.8" y1="399.6" x2="1276.1" y2="530" stroke="#201c18" stroke-opacity="0.06" stroke-width="1.4"/><line x1="709.9" y1="402.2" x2="821.2" y2="530" stroke="#7a7068" stroke-opacity="0.09" stroke-width="1.0"/><line x1="324.9" y1="328.9" x2="-153.6" y2="530" stroke="#201c18" stroke-opacity="0.06" stroke-width="1.7"/><line x1="636.1" y1="316.0" x2="825.5" y2="530" stroke="#201c18" stroke-opacity="0.05" stroke-width="2.0"/><line x1="373.7" y1="325.8" x2="-23.7" y2="530" stroke="#201c18" stroke-opacity="0.07" stroke-width="1.8"/><line x1="469.0" y1="360.6" x2="350.8" y2="530" stroke="#7a7068" stroke-opacity="0.05" stroke-width="2.3"/><line x1="694.3" y1="360.6" x2="868.5" y2="530" stroke="#201c18" stroke-opacity="0.08" stroke-width="2.7"/><line x1="241.8" y1="382.8" x2="-64.9" y2="530" stroke="#201c18" stroke-opacity="0.10" stroke-width="1.6"/><line x1="310.5" y1="401.9" x2="124.5" y2="530" stroke="#7a7068" stroke-opacity="0.11" stroke-width="2.8"/><line x1="275.6" y1="330.1" x2="-292.0" y2="530" stroke="#201c18" stroke-opacity="0.06" stroke-width="1.2"/><line x1="859.8" y1="349.3" x2="1314.0" y2="530" stroke="#201c18" stroke-opacity="0.05" stroke-width="1.8"/><line x1="666.6" y1="306.9" x2="976.0" y2="530" stroke="#7a7068" stroke-opacity="0.09" stroke-width="2.8"/><line x1="869.9" y1="317.1" x2="1627.3" y2="530" stroke="#201c18" stroke-opacity="0.09" stroke-width="2.0"/><line x1="691.9" y1="324.8" x2="977.1" y2="530" stroke="#7a7068" stroke-opacity="0.05" stroke-width="1.1"/><line x1="606.8" y1="359.1" x2="668.8" y2="530" stroke="#201c18" stroke-opacity="0.05" stroke-width="1.4"/><line x1="184.0" y1="393.2" x2="-131.0" y2="530" stroke="#201c18" stroke-opacity="0.10" stroke-width="1.2"/><line x1="-33.2" y1="404.9" x2="-457.5" y2="530" stroke="#201c18" stroke-opacity="0.09" stroke-width="1.7"/><line x1="523.0" y1="359.1" x2="474.0" y2="530" stroke="#7a7068" stroke-opacity="0.08" stroke-width="1.0"/><line x1="806.8" y1="393.6" x2="1012.4" y2="530" stroke="#7a7068" stroke-opacity="0.07" stroke-width="2.5"/><line x1="487.5" y1="325.5" x2="332.2" y2="530" stroke="#7a7068" stroke-opacity="0.08" stroke-width="1.0"/><line x1="1034.5" y1="389.2" x2="1454.3" y2="530" stroke="#201c18" stroke-opacity="0.10" stroke-width="2.3"/><line x1="454.4" y1="368.0" x2="330.4" y2="530" stroke="#201c18" stroke-opacity="0.11" stroke-width="2.6"/><line x1="238.0" y1="400.7" x2="-6.0" y2="530" stroke="#201c18" stroke-opacity="0.09" stroke-width="2.6"/><line x1="432.0" y1="399.1" x2="333.0" y2="530" stroke="#201c18" stroke-opacity="0.09" stroke-width="2.5"/><line x1="795.2" y1="347.6" x2="1160.0" y2="530" stroke="#201c18" stroke-opacity="0.04" stroke-width="1.7"/><line x1="539.3" y1="306.1" x2="478.3" y2="530" stroke="#7a7068" stroke-opacity="0.08" stroke-width="2.2"/><line x1="196.4" y1="404.2" x2="-66.2" y2="530" stroke="#201c18" stroke-opacity="0.06" stroke-width="2.3"/><line x1="625.5" y1="361.0" x2="710.0" y2="530" stroke="#7a7068" stroke-opacity="0.11" stroke-width="2.3"/><line x1="794.0" y1="385.0" x2="1012.9" y2="530" stroke="#201c18" stroke-opacity="0.04" stroke-width="2.2"/><line x1="743.2" y1="331.9" x2="1099.2" y2="530" stroke="#7a7068" stroke-opacity="0.04" stroke-width="1.4"/><line x1="475.8" y1="315.3" x2="264.1" y2="530" stroke="#7a7068" stroke-opacity="0.10" stroke-width="2.1"/><line x1="564.7" y1="406.5" x2="568.0" y2="530" stroke="#201c18" stroke-opacity="0.11" stroke-width="2.3"/><line x1="754.2" y1="313.0" x2="1261.9" y2="530" stroke="#201c18" stroke-opacity="0.09" stroke-width="1.1"/><line x1="859.7" y1="321.8" x2="1539.4" y2="530" stroke="#201c18" stroke-opacity="0.05" stroke-width="2.0"/><line x1="626.5" y1="311.1" x2="805.7" y2="530" stroke="#201c18" stroke-opacity="0.07" stroke-width="2.1"/><line x1="641.3" y1="343.4" x2="775.0" y2="530" stroke="#7a7068" stroke-opacity="0.09" stroke-width="2.1"/><line x1="305.6" y1="380.2" x2="52.1" y2="530" stroke="#7a7068" stroke-opacity="0.04" stroke-width="1.5"/><line x1="236.4" y1="321.4" x2="-501.6" y2="530" stroke="#201c18" stroke-opacity="0.07" stroke-width="2.8"/><line x1="710.2" y1="310.3" x2="1121.2" y2="530" stroke="#201c18" stroke-opacity="0.11" stroke-width="1.1"/><line x1="929.4" y1="350.1" x2="1482.8" y2="530" stroke="#201c18" stroke-opacity="0.11" stroke-width="1.5"/><line x1="585.3" y1="403.4" x2="603.7" y2="530" stroke="#201c18" stroke-opacity="0.07" stroke-width="3.0"/><line x1="891.4" y1="368.4" x2="1278.4" y2="530" stroke="#7a7068" stroke-opacity="0.08" stroke-width="1.9"/><line x1="374.5" y1="310.5" x2="-131.6" y2="530" stroke="#201c18" stroke-opacity="0.05" stroke-width="1.9"/><line x1="714.0" y1="352.8" x2="936.1" y2="530" stroke="#7a7068" stroke-opacity="0.08" stroke-width="1.8"/><line x1="834.2" y1="360.7" x2="1189.3" y2="530" stroke="#201c18" stroke-opacity="0.11" stroke-width="2.5"/><line x1="382.7" y1="317.0" x2="-51.7" y2="530" stroke="#201c18" stroke-opacity="0.09" stroke-width="2.2"/><line x1="444.8" y1="333.5" x2="226.1" y2="530" stroke="#201c18" stroke-opacity="0.08" stroke-width="2.2"/><line x1="712.1" y1="384.1" x2="856.1" y2="530" stroke="#7a7068" stroke-opacity="0.06" stroke-width="3.0"/><line x1="1087.6" y1="397.3" x2="1506.2" y2="530" stroke="#7a7068" stroke-opacity="0.04" stroke-width="1.5"/><line x1="474.8" y1="370.5" x2="377.9" y2="530" stroke="#7a7068" stroke-opacity="0.08" stroke-width="1.1"/><line x1="92.2" y1="376.0" x2="-401.2" y2="530" stroke="#201c18" stroke-opacity="0.08" stroke-width="1.7"/><line x1="540.8" y1="327.1" x2="500.7" y2="530" stroke="#7a7068" stroke-opacity="0.09" stroke-width="2.7"/><line x1="271.3" y1="317.6" x2="-429.0" y2="530" stroke="#201c18" stroke-opacity="0.08" stroke-width="2.5"/><line x1="293.1" y1="349.6" x2="-109.7" y2="530" stroke="#7a7068" stroke-opacity="0.10" stroke-width="1.7"/><line x1="764.7" y1="408.9" x2="903.4" y2="530" stroke="#7a7068" stroke-opacity="0.08" stroke-width="2.5"/><line x1="942.9" y1="349.9" x2="1517.9" y2="530" stroke="#7a7068" stroke-opacity="0.05" stroke-width="2.8"/><line x1="286.7" y1="313.7" x2="-419.4" y2="530" stroke="#201c18" stroke-opacity="0.07" stroke-width="2.4"/><line x1="313.6" y1="386.4" x2="87.4" y2="530" stroke="#7a7068" stroke-opacity="0.05" stroke-width="2.3"/><line x1="213.6" y1="336.9" x2="-412.1" y2="530" stroke="#201c18" stroke-opacity="0.09" stroke-width="1.6"/><line x1="248.1" y1="342.6" x2="-271.3" y2="530" stroke="#201c18" stroke-opacity="0.07" stroke-width="1.2"/><line x1="771.7" y1="364.8" x2="1031.3" y2="530" stroke="#201c18" stroke-opacity="0.11" stroke-width="2.8"/><line x1="479.0" y1="389.3" x2="407.4" y2="530" stroke="#7a7068" stroke-opacity="0.06" stroke-width="1.8"/><line x1="1117.4" y1="398.9" x2="1549.7" y2="530" stroke="#7a7068" stroke-opacity="0.07" stroke-width="1.7"/><line x1="434.0" y1="346.5" x2="235.6" y2="530" stroke="#7a7068" stroke-opacity="0.05" stroke-width="2.1"/><line x1="855.7" y1="361.8" x2="1233.3" y2="530" stroke="#201c18" stroke-opacity="0.08" stroke-width="1.4"/><line x1="886.9" y1="397.5" x2="1145.6" y2="530" stroke="#7a7068" stroke-opacity="0.04" stroke-width="2.0"/><line x1="601.1" y1="364.6" x2="651.5" y2="530" stroke="#201c18" stroke-opacity="0.09" stroke-width="2.6"/><line x1="113.0" y1="362.4" x2="-452.7" y2="530" stroke="#201c18" stroke-opacity="0.05" stroke-width="1.2"/><line x1="862.2" y1="399.4" x2="1095.2" y2="530" stroke="#7a7068" stroke-opacity="0.08" stroke-width="1.3"/><line x1="825.0" y1="373.1" x2="1115.3" y2="530" stroke="#7a7068" stroke-opacity="0.06" stroke-width="2.5"/><line x1="580.5" y1="385.3" x2="599.6" y2="530" stroke="#7a7068" stroke-opacity="0.06" stroke-width="2.9"/><line x1="723.4" y1="356.8" x2="946.5" y2="530" stroke="#201c18" stroke-opacity="0.09" stroke-width="2.4"/><line x1="931.8" y1="348.1" x2="1504.4" y2="530" stroke="#201c18" stroke-opacity="0.09" stroke-width="2.7"/><line x1="935.8" y1="392.6" x2="1253.6" y2="530" stroke="#201c18" stroke-opacity="0.11" stroke-width="2.3"/><line x1="582.4" y1="379.6" x2="604.9" y2="530" stroke="#201c18" stroke-opacity="0.07" stroke-width="1.8"/><line x1="140.3" y1="382.8" x2="-263.8" y2="530" stroke="#201c18" stroke-opacity="0.07" stroke-width="1.3"/><line x1="284.9" y1="349.6" x2="-130.0" y2="530" stroke="#7a7068" stroke-opacity="0.11" stroke-width="1.1"/><line x1="429.2" y1="317.1" x2="109.4" y2="530" stroke="#201c18" stroke-opacity="0.09" stroke-width="1.4"/><line x1="142.6" y1="353.2" x2="-456.6" y2="530" stroke="#201c18" stroke-opacity="0.10" stroke-width="1.1"/><line x1="273.7" y1="324.4" x2="-350.0" y2="530" stroke="#7a7068" stroke-opacity="0.06" stroke-width="2.4"/><line x1="628.3" y1="328.5" x2="768.0" y2="530" stroke="#7a7068" stroke-opacity="0.06" stroke-width="1.3"/><line x1="769.1" y1="337.7" x2="1142.3" y2="530" stroke="#201c18" stroke-opacity="0.10" stroke-width="2.0"/><line x1="245.5" y1="398.2" x2="-0.9" y2="530" stroke="#201c18" stroke-opacity="0.06" stroke-width="2.1"/><line x1="996.2" y1="355.7" x2="1601.1" y2="530" stroke="#7a7068" stroke-opacity="0.04" stroke-width="2.9"/><line x1="822.9" y1="345.4" x2="1243.3" y2="530" stroke="#201c18" stroke-opacity="0.08" stroke-width="1.5"/><line x1="1096.6" y1="374.0" x2="1677.6" y2="530" stroke="#7a7068" stroke-opacity="0.04" stroke-width="1.9"/></g></g>
<!-- upper wall -->
<polygon points="2,102 1003,102 1003,160 2,190" fill="url(#gUp)"/>


<!-- right wall -->
<polygon points="864,102 1003,102 1003,282 830,264 860,158" fill="#45352a"/>
<!-- left wall -->
<polygon points="2,102 47,103 68,178 90,186 101,226 86,226 94,258 2,258" fill="#3a3125"/>
<polygon points="837,171 866,157 830,264 825,224" fill="#4e3e32"/>
<!-- beam -->
<polygon points="65,178 864,158 837,171 90,187" fill="url(#gBeam)"/>
<polyline points="65,178.8 864,158.8" stroke="#b09080" stroke-width="2" fill="none"/>
<!-- sky -->
<polygon points="90,187 837,171 825,224 101,226" fill="url(#gSky)"/>

<ellipse cx="560" cy="180" rx="60" ry="11" fill="url(#gSun)" opacity="0.8"/>
<!-- lower wall -->
<polygon points="86,226 830,224 830,264 94,258" fill="url(#gLow)"/>
<polygon points="326,227 526,227 526,263 330,262" fill="#563828"/>
<polyline points="700,224.5 845,223.5" stroke="#d8c8c0" stroke-width="0.8" fill="none"/>
<!-- HOTEL BAR -->
<polygon points="295,125 316,126 318,157 297,156" fill="#b8c4b0" opacity="0.8" filter="url(#soft)"/>
<polygon points="299,129 314,130 315,153 300,152" fill="#a8e048"/>
<g filter="url(#glow)" stroke-linejoin="round" font-family="Liberation Sans" font-weight="bold">
<text x="344.5" y="165.5" font-size="32" fill="#2e3a10" stroke="#2e3a10" stroke-width="3" opacity="0.5" textLength="91" lengthAdjust="spacingAndGlyphs" transform="rotate(-0.6 390 155)">HOTEL</text>
<text x="344.5" y="165" font-size="32" fill="#aee43a" stroke="#aee43a" stroke-width="1.4" textLength="91" lengthAdjust="spacingAndGlyphs" transform="rotate(-0.6 390 155)">HOTEL</text>
<text x="458" y="163.8" font-size="34" fill="#2e3a10" stroke="#2e3a10" stroke-width="3" opacity="0.5" textLength="55.5" lengthAdjust="spacingAndGlyphs">BAR</text>
<text x="458" y="163.5" font-size="34" fill="#aee43a" stroke="#aee43a" stroke-width="1.4" textLength="55.5" lengthAdjust="spacingAndGlyphs">BAR</text>
</g>
<rect x="368" y="208" width="7" height="17" rx="2" fill="#2a58d8"/>
<rect x="383" y="210" width="15" height="15" fill="#2a9c3c"/>
<circle cx="412" cy="219" r="4" fill="#fff"/>
</svg><div style="left:0px;top:101px;width:1005px;height:1px;background:#f8f8f8;"></div><div style="left:1003px;top:102px;width:5px;height:420px;background:#f6f6f6;"></div><div style="left:0px;top:102px;width:2px;height:420px;background:#e8e8e8;"></div><div style="left:0px;top:521px;width:1008px;height:5.5px;background:#f8f8f8;"></div><div style="left:679.8px;top:479.8px;width:323.5px;height:41px;background:linear-gradient(#7a0006,#a8000a);"></div><div style="left:685.5px;top:485.5px;width:317.5px;height:35.5px;background:linear-gradient(#e4000a,#dc0008 18%,#c8000a 75%,#bc0008);"></div><div style="left:679.8px;top:479.8px;width:323.5px;height:5.7px;background:linear-gradient(#6e0008,#b0000a);"></div><div style="left:544.5px;width:600px;text-align:center;top:488.50px;font:bold 29px/29px 'Liberation Sans', sans-serif;color:#f4e8ec;white-space:pre;letter-spacing:1.8px;-webkit-text-stroke:0.7px #f4e8ec">Sprint: Off</div><div style="left:1008px;top:84px;width:272px;height:442px;background:#ececec;"></div><div style="left:1008px;top:85px;width:271px;height:15.5px;background:#e1e1e1;"></div><div style="left:832px;width:600px;text-align:center;top:89.10px;font:normal 7.8px/7.8px 'Liberation Sans', sans-serif;color:#1e1e1e;white-space:pre;">Explorer</div><svg style="left:1250px;top:85px;overflow:visible" width="30" height="16" viewBox="1250 85 30 16">
<path d="M1261.8,89.8 L1259.2,92.4" stroke="#111" stroke-width="0.9"/>
<path d="M1257.6,90.6 L1257.6,94 L1261,94 Z" fill="#000"/>
<path d="M1255.8,92.4 A3.4,3.4 0 0 0 1259.6,96.4" fill="none" stroke="#444" stroke-width="0.9"/>
<path d="M1268,91 L1272,95 M1272,91 L1268,95" stroke="#222" stroke-width="0.9"/></svg><div style="left:1008px;top:100.5px;width:271px;height:154px;background:#ffffff;"></div><svg style="left:1008px;top:100px;overflow:visible" width="32" height="14" viewBox="1008 100 32 14"><path d="M1013.2,106 H1018.4 L1016.4,108.6 V111.4 H1015.2 V108.6 Z" fill="#222"/><rect x="1021.4" y="109.4" width="1.2" height="1" fill="#555"/></svg><div style="left:1029.5px;top:104.40px;font:normal 7.59px/7.59px 'Liberation Sans', sans-serif;color:#1e1e1e;white-space:pre;">Filter workspace (Ctrl+Shift+X)</div><svg style="left:1266px;top:102px;overflow:visible" width="12" height="10" viewBox="1266 102 12 10"><path d="M1270.6,106.2 H1274 L1272.3,108.2 Z" fill="#777"/></svg><div style="left:1008px;top:114px;width:261.5px;height:12.7px;background:#6690d8;"></div><svg style="left:1008px;top:114px;overflow:visible" width="62" height="13" viewBox="1008 114 62 13">
<path d="M1025,119.4 H1031 L1028,123 Z" fill="#fff"/>
<rect x="1041.4" y="117" width="5.8" height="5.6" rx="1.4" fill="#34506e" stroke="#fff" stroke-width="1.1"/>
<path d="M1039.8,126.2 V124.2 A2.4,2.4 0 0 1 1042.2,121.8" fill="none" stroke="#fff" stroke-width="1.2"/>
<path d="M1044.6,121.8 V126.4 M1042.4,124.2 H1047" fill="none" stroke="#fff" stroke-width="1.1"/>
</svg><div style="left:1052.8px;top:117.70px;font:normal 7.8px/7.8px 'Liberation Sans', sans-serif;color:#ffffff;white-space:pre;">Soup</div><svg style="left:1050px;top:128px;overflow:visible" width="14" height="11" viewBox="1050 128 14 11"><rect x="1052.8" y="129.4" width="7.4" height="8.2" fill="#9a9a9a" stroke="#222" stroke-width="0.9"/><path d="M1057.8,137.6 L1060.2,135.2" stroke="#222" stroke-width="0.9"/></svg><div style="left:1066.3px;top:130.30px;font:normal 7.8px/7.8px 'Liberation Sans', sans-serif;color:#1e1e1e;white-space:pre;">Script</div><div style="left:1052.8px;top:142.00px;font:normal 7.8px/7.8px 'Liberation Sans', sans-serif;color:#1e1e1e;white-space:pre;">Part</div><div style="left:1052.8px;top:154.00px;font:normal 7.8px/7.8px 'Liberation Sans', sans-serif;color:#1e1e1e;white-space:pre;">Part</div><div style="left:1052.8px;top:166.00px;font:normal 7.8px/7.8px 'Liberation Sans', sans-serif;color:#1e1e1e;white-space:pre;">Part</div><div style="left:1052.8px;top:178.00px;font:normal 7.8px/7.8px 'Liberation Sans', sans-serif;color:#1e1e1e;white-space:pre;">Part</div><div style="left:1052.8px;top:190.00px;font:normal 7.8px/7.8px 'Liberation Sans', sans-serif;color:#1e1e1e;white-space:pre;">Part</div><div style="left:1052.8px;top:202.00px;font:normal 7.8px/7.8px 'Liberation Sans', sans-serif;color:#1e1e1e;white-space:pre;">Part</div><div style="left:1052.8px;top:214.00px;font:normal 7.8px/7.8px 'Liberation Sans', sans-serif;color:#1e1e1e;white-space:pre;">Part</div><div style="left:1052.8px;top:226.00px;font:normal 7.8px/7.8px 'Liberation Sans', sans-serif;color:#1e1e1e;white-space:pre;">Part</div><div style="left:1052.8px;top:238.00px;font:normal 7.8px/7.8px 'Liberation Sans', sans-serif;color:#1e1e1e;white-space:pre;">Part</div><div style="left:1052.8px;top:250.00px;font:normal 7.8px/7.8px 'Liberation Sans', sans-serif;color:#1e1e1e;white-space:pre;">Part</div><svg style="left:1035px;top:138px;overflow:visible" width="17" height="124" viewBox="1035 138 17 124"><circle cx="1043.5" cy="145.3" r="4.3" fill="none" stroke="#bdbdbd" stroke-width="0.8"/><path d="M1040,143.10000000000002 L1043.5,145.5 L1047,143.10000000000002 M1043.5,145.5 V149.60000000000002" fill="none" stroke="#bdbdbd" stroke-width="0.8"/><circle cx="1043.5" cy="157.3" r="4.3" fill="none" stroke="#bdbdbd" stroke-width="0.8"/><path d="M1040,155.10000000000002 L1043.5,157.5 L1047,155.10000000000002 M1043.5,157.5 V161.60000000000002" fill="none" stroke="#bdbdbd" stroke-width="0.8"/><circle cx="1043.5" cy="169.3" r="4.3" fill="none" stroke="#bdbdbd" stroke-width="0.8"/><path d="M1040,167.10000000000002 L1043.5,169.5 L1047,167.10000000000002 M1043.5,169.5 V173.60000000000002" fill="none" stroke="#bdbdbd" stroke-width="0.8"/><circle cx="1043.5" cy="181.3" r="4.3" fill="none" stroke="#bdbdbd" stroke-width="0.8"/><path d="M1040,179.10000000000002 L1043.5,181.5 L1047,179.10000000000002 M1043.5,181.5 V185.60000000000002" fill="none" stroke="#bdbdbd" stroke-width="0.8"/><circle cx="1043.5" cy="193.3" r="4.3" fill="none" stroke="#bdbdbd" stroke-width="0.8"/><path d="M1040,191.10000000000002 L1043.5,193.5 L1047,191.10000000000002 M1043.5,193.5 V197.60000000000002" fill="none" stroke="#bdbdbd" stroke-width="0.8"/><circle cx="1043.5" cy="205.3" r="4.3" fill="none" stroke="#bdbdbd" stroke-width="0.8"/><path d="M1040,203.10000000000002 L1043.5,205.5 L1047,203.10000000000002 M1043.5,205.5 V209.60000000000002" fill="none" stroke="#bdbdbd" stroke-width="0.8"/><circle cx="1043.5" cy="217.3" r="4.3" fill="none" stroke="#bdbdbd" stroke-width="0.8"/><path d="M1040,215.10000000000002 L1043.5,217.5 L1047,215.10000000000002 M1043.5,217.5 V221.60000000000002" fill="none" stroke="#bdbdbd" stroke-width="0.8"/><circle cx="1043.5" cy="229.3" r="4.3" fill="none" stroke="#bdbdbd" stroke-width="0.8"/><path d="M1040,227.10000000000002 L1043.5,229.5 L1047,227.10000000000002 M1043.5,229.5 V233.60000000000002" fill="none" stroke="#bdbdbd" stroke-width="0.8"/><circle cx="1043.5" cy="241.3" r="4.3" fill="none" stroke="#bdbdbd" stroke-width="0.8"/><path d="M1040,239.10000000000002 L1043.5,241.5 L1047,239.10000000000002 M1043.5,241.5 V245.60000000000002" fill="none" stroke="#bdbdbd" stroke-width="0.8"/><circle cx="1043.5" cy="253.3" r="4.3" fill="none" stroke="#bdbdbd" stroke-width="0.8"/><path d="M1040,251.10000000000002 L1043.5,253.5 L1047,251.10000000000002 M1043.5,253.5 V257.6" fill="none" stroke="#bdbdbd" stroke-width="0.8"/></svg><div style="left:1269.5px;top:114.5px;width:9.0px;height:139.5px;background:#f4f4f4;border:1px solid #c8c8c8;box-sizing:border-box"></div><div style="left:1269.5px;top:125px;width:9.0px;height:96px;background:#ececec;border:1px solid #c8c8c8;box-sizing:border-box"></div><div style="left:1269.5px;top:114.5px;width:9.0px;height:10.5px;background:#fdfdfd;border:1px solid #c8c8c8;box-sizing:border-box"></div><div style="left:1269.5px;top:244px;width:9.0px;height:10px;background:#fdfdfd;border:1px solid #c8c8c8;box-sizing:border-box"></div><svg style="left:1269.5px;top:114.5px;overflow:visible" width="9.0" height="139.5" viewBox="1269.5 114.5 9.0 139.5"><path d="M1272.2,120.5 L1275.8,120.5 L1274.0,118.5 Z" fill="#888"/><path d="M1272.2,248 L1275.8,248 L1274.0,250 Z" fill="#888"/></svg><div style="left:1008px;top:254px;width:271px;height:3.5px;background:#e9e9e9;"></div><div style="left:1008px;top:257.5px;width:271px;height:14.5px;background:#e1e1e1;"></div><div style="left:832.5px;width:600px;text-align:center;top:261.70px;font:normal 7.8px/7.8px 'Liberation Sans', sans-serif;color:#1e1e1e;white-space:pre;">Properties - UnionOperation &quot;Soup&quot;</div><svg style="left:1250px;top:257px;overflow:visible" width="30" height="16" viewBox="1250 257 30 16">
<path d="M1261.8,261.8 L1259.2,264.4" stroke="#111" stroke-width="0.9"/>
<path d="M1257.6,262.6 L1257.6,266 L1261,266 Z" fill="#000"/>
<path d="M1255.8,264.4 A3.4,3.4 0 0 0 1259.6,268.4" fill="none" stroke="#444" stroke-width="0.9"/>
<path d="M1268,263 L1272,267 M1272,263 L1268,267" stroke="#222" stroke-width="0.9"/></svg><div style="left:1008px;top:272px;width:271px;height:14px;background:#ffffff;"></div><div style="left:1012px;top:276.11px;font:normal 7.59px/7.59px 'Liberation Sans', sans-serif;color:#1e1e1e;white-space:pre;">Filter Properties (Ctrl+Shift+P)</div><svg style="left:1266px;top:274px;overflow:visible" width="12" height="10" viewBox="1266 274 12 10"><path d="M1270.6,278 H1274 L1272.3,280 Z" fill="#777"/></svg><div style="left:1008px;top:289px;width:271px;height:236px;background:#ffffff;border-left:1px solid #c8c8c8;box-sizing:border-box"></div><div style="left:1009px;top:289px;width:260px;height:17px;background:#e4e4e4;"></div><svg style="left:1008px;top:289px;overflow:visible" width="16" height="17" viewBox="1008 289 16 17"><path d="M1013,296 H1018.2 L1015.6,299.2 Z" fill="#111"/></svg><div style="left:1025px;top:294.85px;font:bold 7.3px/7.3px 'Liberation Sans', sans-serif;color:#111;white-space:pre;">Appearance</div><div style="left:1009px;top:322.3px;width:260px;height:1px;background:#f0f0f0;"></div><div style="left:1009px;top:338px;width:260px;height:1px;background:#f0f0f0;"></div><div style="left:1009px;top:353.5px;width:260px;height:1px;background:#f0f0f0;"></div><div style="left:1009px;top:367px;width:260px;height:1px;background:#f0f0f0;"></div><div style="left:1009px;top:381px;width:260px;height:1px;background:#f0f0f0;"></div><div style="left:1009px;top:395px;width:260px;height:1px;background:#f0f0f0;"></div><div style="left:1009px;top:409px;width:260px;height:1px;background:#f0f0f0;"></div><div style="left:1009px;top:423px;width:260px;height:1px;background:#f0f0f0;"></div><div style="left:1025px;top:310.80px;font:normal 7.8px/7.8px 'Liberation Sans', sans-serif;color:#1e1e1e;white-space:pre;">BrickColor</div><div style="left:1141px;top:310.3px;width:8.2px;height:7.6px;background:#e6cf22;border:1px solid #333;box-sizing:border-box"></div><div style="left:1154px;top:310.80px;font:normal 7.8px/7.8px 'Liberation Sans', sans-serif;color:#1e1e1e;white-space:pre;">Bright yellow</div><div style="left:1025px;top:326.90px;font:normal 7.8px/7.8px 'Liberation Sans', sans-serif;color:#1e1e1e;white-space:pre;">CastShadow</div><svg style="left:1143px;top:326.59999999999997px;overflow:visible" width="8" height="8.0" viewBox="1143 326.59999999999997 8 8.0"><rect x="1143" y="326.59999999999997" width="7.6" height="7.6" fill="#1f80cf"/><path d="M1144.6,330.49999999999994 L1146.2,332.09999999999997 L1149.2,328.59999999999997" fill="none" stroke="#fff" stroke-width="1.1"/></svg><div style="left:1025px;top:342.10px;font:normal 7.8px/7.8px 'Liberation Sans', sans-serif;color:#1e1e1e;white-space:pre;">Color</div><div style="left:1141px;top:341.59999999999997px;width:8.2px;height:7.6px;background:#e6cf22;border:1px solid #333;box-sizing:border-box"></div><div style="left:1154px;top:342.10px;font:normal 7.8px/7.8px 'Liberation Sans', sans-serif;color:#1e1e1e;white-space:pre;">[245, 205, 48] (Bright yellow)</div><div style="left:1025px;top:356.70px;font:normal 7.8px/7.8px 'Liberation Sans', sans-serif;color:#1e1e1e;white-space:pre;">Material</div><div style="left:1141px;top:356.70px;font:normal 7.8px/7.8px 'Liberation Sans', sans-serif;color:#1e1e1e;white-space:pre;">Sand</div><div style="left:1025px;top:370.50px;font:normal 7.8px/7.8px 'Liberation Sans', sans-serif;color:#1e1e1e;white-space:pre;">MaterialVariant</div><div style="left:1025px;top:384.90px;font:normal 7.8px/7.8px 'Liberation Sans', sans-serif;color:#1e1e1e;white-space:pre;">Reflectance</div><div style="left:1141px;top:384.90px;font:normal 7.8px/7.8px 'Liberation Sans', sans-serif;color:#1e1e1e;white-space:pre;">0</div><div style="left:1025px;top:398.90px;font:normal 7.8px/7.8px 'Liberation Sans', sans-serif;color:#1e1e1e;white-space:pre;">RenderFidelity</div><div style="left:1141px;top:398.90px;font:normal 7.8px/7.8px 'Liberation Sans', sans-serif;color:#1e1e1e;white-space:pre;">Automatic</div><div style="left:1025px;top:412.90px;font:normal 7.8px/7.8px 'Liberation Sans', sans-serif;color:#1e1e1e;white-space:pre;">SmoothingAngle</div><div style="left:1141px;top:412.90px;font:normal 7.8px/7.8px 'Liberation Sans', sans-serif;color:#1e1e1e;white-space:pre;">0</div><div style="left:1025px;top:426.90px;font:normal 7.8px/7.8px 'Liberation Sans', sans-serif;color:#1e1e1e;white-space:pre;">Transparency</div><div style="left:1141px;top:426.90px;font:normal 7.8px/7.8px 'Liberation Sans', sans-serif;color:#1e1e1e;white-space:pre;">0</div><div style="left:1009px;top:437.8px;width:260px;height:16px;background:#e4e4e4;"></div><svg style="left:1008px;top:438px;overflow:visible" width="16" height="16" viewBox="1008 438 16 16"><path d="M1013,443.6 H1018.2 L1015.6,446.8 Z" fill="#111"/></svg><div style="left:1025px;top:441.85px;font:bold 7.3px/7.3px 'Liberation Sans', sans-serif;color:#111;white-space:pre;">Data</div><div style="left:1009px;top:469.5px;width:260px;height:1px;background:#ececec;"></div><div style="left:1009px;top:484px;width:260px;height:1px;background:#ececec;"></div><div style="left:1009px;top:499.5px;width:260px;height:1px;background:#ececec;"></div><div style="left:1009px;top:514px;width:260px;height:1px;background:#ececec;"></div><div style="left:1025px;top:459.10px;font:normal 7.8px/7.8px 'Liberation Sans', sans-serif;color:#1e1e1e;white-space:pre;">Archivable</div><svg style="left:1143px;top:458.79999999999995px;overflow:visible" width="8" height="8.0" viewBox="1143 458.79999999999995 8 8.0"><rect x="1143" y="458.79999999999995" width="7.6" height="7.6" fill="#1f80cf"/><path d="M1144.6,462.69999999999993 L1146.2,464.29999999999995 L1149.2,460.79999999999995" fill="none" stroke="#fff" stroke-width="1.1"/></svg><div style="left:1025px;top:473.10px;font:normal 7.8px/7.8px 'Liberation Sans', sans-serif;color:#9a9a9a;white-space:pre;">ClassName</div><div style="left:1141px;top:473.10px;font:normal 7.8px/7.8px 'Liberation Sans', sans-serif;color:#9a9a9a;white-space:pre;">UnionOperation</div><div style="left:1025px;top:488.60px;font:normal 7.8px/7.8px 'Liberation Sans', sans-serif;color:#1e1e1e;white-space:pre;">Locked</div><div style="left:1143px;top:488.09999999999997px;width:8px;height:8px;background:#fff;border:1px solid #444;box-sizing:border-box;border-radius:1px"></div><div style="left:1025px;top:503.70px;font:normal 7.8px/7.8px 'Liberation Sans', sans-serif;color:#9a9a9a;white-space:pre;">MeshSize</div><div style="left:1141px;top:503.70px;font:normal 7.8px/7.8px 'Liberation Sans', sans-serif;color:#9a9a9a;white-space:pre;">1.441, 0.527, 1.441</div><div style="left:1025px;top:517.20px;font:normal 7.8px/7.8px 'Liberation Sans', sans-serif;color:#1e1e1e;white-space:pre;">Name</div><div style="left:1141px;top:517.20px;font:normal 7.8px/7.8px 'Liberation Sans', sans-serif;color:#1e1e1e;white-space:pre;">Soup</div><svg style="left:1008px;top:500px;overflow:visible" width="16" height="14" viewBox="1008 500 16 14"><path d="M1013.4,504.6 L1016.4,507 L1013.4,509.4 Z" fill="#111"/></svg><div style="left:1138px;top:306px;width:1px;height:219px;background:#efefef;"></div><div style="left:1138px;top:438px;width:1px;height:16px;background:#e4e4e4;"></div><div style="left:1268.8px;top:289.5px;width:10.0px;height:232.5px;background:#ececec;border:1px solid #c8c8c8;box-sizing:border-box"></div><div style="left:1268.8px;top:298px;width:10.0px;height:60px;background:#ffffff;border:1px solid #c8c8c8;box-sizing:border-box"></div><div style="left:1268.8px;top:289.5px;width:10.0px;height:10.5px;background:#fdfdfd;border:1px solid #c8c8c8;box-sizing:border-box"></div><div style="left:1268.8px;top:512px;width:10.0px;height:10px;background:#fdfdfd;border:1px solid #c8c8c8;box-sizing:border-box"></div><svg style="left:1268.8px;top:289.5px;overflow:visible" width="10.0" height="232.5" viewBox="1268.8 289.5 10.0 232.5"><path d="M1272.0,295.5 L1275.6,295.5 L1273.8,293.5 Z" fill="#888"/><path d="M1272.0,516 L1275.6,516 L1273.8,518 Z" fill="#888"/></svg><div style="left:1008px;top:522.5px;width:272px;height:4px;background:#f4f4f4;"></div><div style="left:0px;top:521px;width:1008px;height:5.5px;background:#f8f8f8;"></div><div style="left:0px;top:526.5px;width:1280px;height:1px;background:#cdcdcd;"></div><div style="left:0px;top:527.5px;width:1280px;height:11px;background:#e2e2e2;"></div><div style="left:0px;top:538.5px;width:1280px;height:2.5px;background:#efefef;"></div><div style="left:328px;width:600px;text-align:center;top:529.60px;font:normal 7.8px/7.8px 'Liberation Sans', sans-serif;color:#1e1e1e;white-space:pre;">Output</div><svg style="left:1250px;top:525.5px;overflow:visible" width="30" height="16.0" viewBox="1250 525.5 30 16.0">
<path d="M1261.8,530.3 L1259.2,532.9" stroke="#111" stroke-width="0.9"/>
<path d="M1257.6,531.1 L1257.6,534.5 L1261,534.5 Z" fill="#000"/>
<path d="M1255.8,532.9 A3.4,3.4 0 0 0 1259.6,536.9" fill="none" stroke="#444" stroke-width="0.9"/>
<path d="M1268,531.5 L1272,535.5 M1272,531.5 L1268,535.5" stroke="#222" stroke-width="0.9"/></svg><div style="left:0px;top:541px;width:1280px;height:136px;background:#ffffff;"></div><div style="left:2px;top:542px;width:68.5px;height:17.5px;background:#fff;border:1px solid #dcdcdc;box-sizing:border-box"></div><div style="left:10.5px;top:547.21px;font:normal 7.59px/7.59px 'Liberation Sans', sans-serif;color:#1e1e1e;white-space:pre;">All Messages</div><div style="left:75px;top:542px;width:66px;height:17.5px;background:#fff;border:1px solid #dcdcdc;box-sizing:border-box"></div><div style="left:83px;top:547.21px;font:normal 7.59px/7.59px 'Liberation Sans', sans-serif;color:#1e1e1e;white-space:pre;">All Contexts</div><svg style="left:55px;top:545px;overflow:visible" width="85" height="12" viewBox="55 545 85 12"><path d="M61.4,550 L63.2,551.8 L65,550 M131.8,550 L133.6,551.8 L135.4,550" fill="none" stroke="#444" stroke-width="0.8"/></svg><div style="left:1050px;top:544px;width:186.5px;height:14px;background:#fff;border:1px solid #c8c8c8;box-sizing:border-box"></div><div style="left:1054px;top:547.81px;font:normal 7.59px/7.59px 'Liberation Sans', sans-serif;color:#555;white-space:pre;">Filter...</div><svg style="left:1225px;top:542px;overflow:visible" width="55" height="18" viewBox="1225 542 55 18"><path d="M1228,550 H1231 L1229.5,551.8 Z" fill="#777"/>
<path d="M1250.2,543.6 V550.4" stroke="#333" stroke-width="1.1"/>
<path d="M1245.2,558.6 L1246.4,551 H1254 L1255.2,558.6 Z" fill="#333"/>
<path d="M1247.8,558.6 V554.6 M1250.2,558.6 V554.6 M1252.6,558.6 V554.6" stroke="#fff" stroke-width="0.6"/>
<path d="M1244.4,559.2 H1256" stroke="#333" stroke-width="0.8"/>
<circle cx="1267.6" cy="550.6" r="0.75" fill="#333"/><circle cx="1270.4" cy="550.6" r="0.75" fill="#333"/><circle cx="1273.2" cy="550.6" r="0.75" fill="#333"/></svg><div style="left:0px;top:561px;width:1268px;height:1px;background:#e2e2e2;"></div><div style="left:15px;top:563.95px;font:normal 8.9px/8.9px 'Liberation Mono', monospace;color:#7a7a7a;white-space:pre;">16:57:22.338</div><div style="left:89px;top:563.95px;font:normal 8.9px/8.9px 'Liberation Mono', monospace;color:#2b2b8c;white-space:pre;">Stack Begin</div><div style="left:158.42000000000002px;top:563.95px;font:normal 8.9px/8.9px 'Liberation Mono', monospace;color:#c8c8c8;white-space:pre;">-</div><div style="left:174.44px;top:563.95px;font:normal 8.9px/8.9px 'Liberation Mono', monospace;color:#8a8a8a;white-space:pre;">Studio</div><div style="left:15px;top:573.95px;font:normal 8.9px/8.9px 'Liberation Mono', monospace;color:#7a7a7a;white-space:pre;">16:57:22.338</div><div style="left:89px;top:573.95px;font:normal 8.9px/8.9px 'Liberation Mono', monospace;color:#2b2b8c;white-space:pre;">Script 'ServerScriptService.CheckIn.MainManagerServer', Line 136 - function RemoveKey</div><div style="left:553.5799999999999px;top:573.95px;font:normal 8.9px/8.9px 'Liberation Mono', monospace;color:#c8c8c8;white-space:pre;">-</div><div style="left:569.5999999999999px;top:573.95px;font:normal 8.9px/8.9px 'Liberation Mono', monospace;color:#8a8a8a;white-space:pre;">Studio</div><div style="left:15px;top:583.95px;font:normal 8.9px/8.9px 'Liberation Mono', monospace;color:#7a7a7a;white-space:pre;">16:57:22.338</div><div style="left:89px;top:583.95px;font:normal 8.9px/8.9px 'Liberation Mono', monospace;color:#2b2b8c;white-space:pre;">Script 'ServerScriptService.CheckIn.MainManagerServer', Line 191</div><div style="left:441.44px;top:583.95px;font:normal 8.9px/8.9px 'Liberation Mono', monospace;color:#c8c8c8;white-space:pre;">-</div><div style="left:457.46px;top:583.95px;font:normal 8.9px/8.9px 'Liberation Mono', monospace;color:#8a8a8a;white-space:pre;">Studio</div><div style="left:15px;top:593.95px;font:normal 8.9px/8.9px 'Liberation Mono', monospace;color:#7a7a7a;white-space:pre;">16:57:22.338</div><div style="left:89px;top:593.95px;font:normal 8.9px/8.9px 'Liberation Mono', monospace;color:#2b2b8c;white-space:pre;">Stack End</div><div style="left:147.74px;top:593.95px;font:normal 8.9px/8.9px 'Liberation Mono', monospace;color:#c8c8c8;white-space:pre;">-</div><div style="left:163.76px;top:593.95px;font:normal 8.9px/8.9px 'Liberation Mono', monospace;color:#8a8a8a;white-space:pre;">Studio</div><div style="left:15px;top:603.95px;font:normal 8.9px/8.9px 'Liberation Mono', monospace;color:#7a7a7a;white-space:pre;">17:00:04.270</div><div style="left:89px;top:603.95px;font:bold 8.9px/8.9px 'Liberation Mono', monospace;color:#b8102a;white-space:pre;"> ▸ Kicked from Live Scripting Session: Script was deleted (x2)</div><div style="left:430.76px;top:603.95px;font:normal 8.9px/8.9px 'Liberation Mono', monospace;color:#c8c8c8;white-space:pre;">-</div><div style="left:446.78px;top:603.95px;font:normal 8.9px/8.9px 'Liberation Mono', monospace;color:#8a8a8a;white-space:pre;">Studio</div><div style="left:15px;top:613.95px;font:normal 8.9px/8.9px 'Liberation Mono', monospace;color:#7a7a7a;white-space:pre;">17:01:49.886</div><div style="left:89px;top:613.95px;font:bold 8.9px/8.9px 'Liberation Mono', monospace;color:#3c1468;white-space:pre;">Russian resort auto-recovery file was created</div><div style="left:339.98px;top:613.95px;font:normal 8.9px/8.9px 'Liberation Mono', monospace;color:#c8c8c8;white-space:pre;">-</div><div style="left:356.0px;top:613.95px;font:normal 8.9px/8.9px 'Liberation Mono', monospace;color:#8a8a8a;white-space:pre;">Studio</div><div style="left:15px;top:623.95px;font:normal 8.9px/8.9px 'Liberation Mono', monospace;color:#7a7a7a;white-space:pre;">17:02:45.379</div><div style="left:89px;top:623.95px;font:bold 8.9px/8.9px 'Liberation Mono', monospace;color:#b8102a;white-space:pre;">Kicked from Live Scripting Session: Script was deleted</div><div style="left:388.03999999999996px;top:623.95px;font:normal 8.9px/8.9px 'Liberation Mono', monospace;color:#c8c8c8;white-space:pre;">-</div><div style="left:404.06px;top:623.95px;font:normal 8.9px/8.9px 'Liberation Mono', monospace;color:#8a8a8a;white-space:pre;">Studio</div><div style="left:0px;top:641px;width:1280px;height:1px;background:#cfcfcf;"></div><div style="left:0px;top:656px;width:1280px;height:1px;background:#cfcfcf;"></div><div style="left:7px;top:642px;width:1px;height:14px;background:#d8d8d8;"></div><svg style="left:0px;top:642px;overflow:visible" width="8" height="14" viewBox="0 642 8 14"><circle cx="2.6" cy="646" r="0.55" fill="#444"/><circle cx="2.6" cy="649" r="0.55" fill="#444"/><circle cx="2.6" cy="652" r="0.55" fill="#444"/></svg><div style="left:10px;top:646.15px;font:normal 7.7px/7.7px 'Liberation Mono', monospace;color:#222;white-space:pre;">Run a command</div><svg style="left:1266px;top:644px;overflow:visible" width="14" height="10" viewBox="1266 644 14 10"><path d="M1270.6,648 H1274 L1272.3,650 Z" fill="#888"/></svg><div style="left:1268px;top:562px;width:10.5px;height:79px;background:#f4f4f4;border:1px solid #c8c8c8;box-sizing:border-box"></div><div style="left:1268px;top:572px;width:10.5px;height:59px;background:#f0f0f0;border:1px solid #c8c8c8;box-sizing:border-box"></div><div style="left:1268px;top:562px;width:10.5px;height:10.5px;background:#fdfdfd;border:1px solid #c8c8c8;box-sizing:border-box"></div><div style="left:1268px;top:631px;width:10.5px;height:10px;background:#fdfdfd;border:1px solid #c8c8c8;box-sizing:border-box"></div><svg style="left:1268px;top:562px;overflow:visible" width="10.5" height="79" viewBox="1268 562 10.5 79"><path d="M1271.45,568 L1275.05,568 L1273.25,566 Z" fill="#888"/><path d="M1271.45,635 L1275.05,635 L1273.25,637 Z" fill="#888"/></svg><div style="left:0px;top:678px;width:1280px;height:42px;background:#000;"></div>
</div>
</body></html>
